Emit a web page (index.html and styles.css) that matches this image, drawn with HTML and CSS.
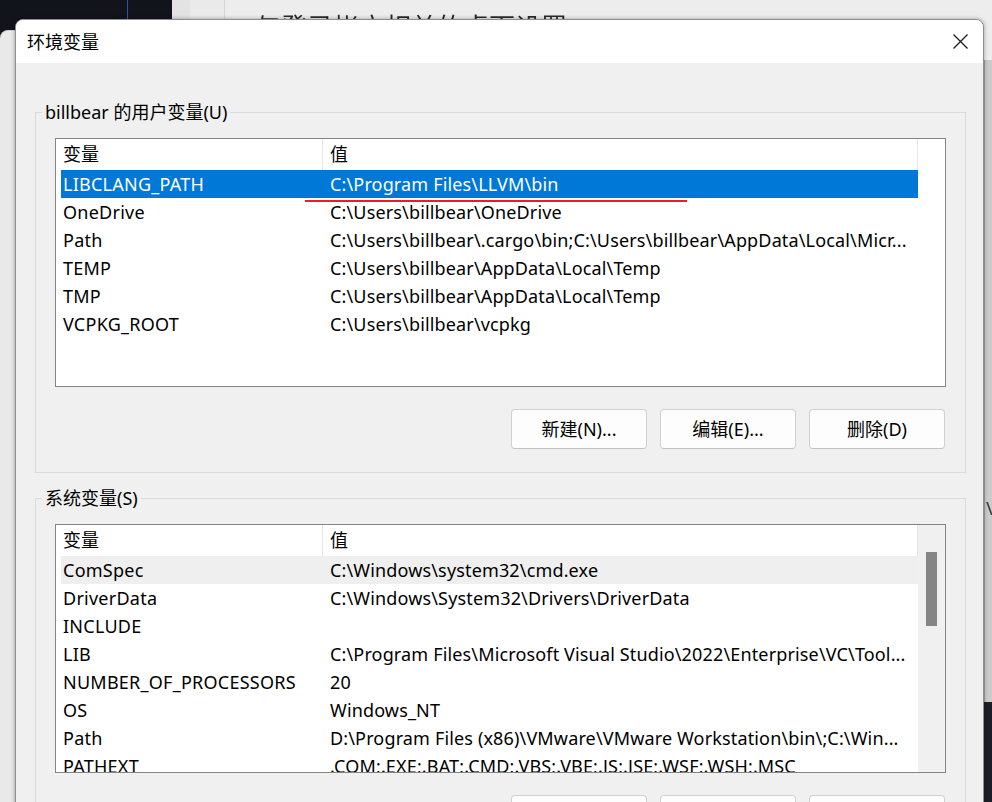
FILE: index.html
```html
<!DOCTYPE html>
<html lang="zh-CN">
<head>
<meta charset="utf-8">
<title>环境变量</title>
<link rel="stylesheet" href="styles.css">
</head>
<body>
<div class="bg-dark"></div>
<div class="bg-blue"></div>
<div class="bg-strip1"></div>
<div class="bg-strip2"></div>
<div class="bg-text">与登录帐户相关的桌面设置</div>
<div class="win-left"></div>
<div class="win-right"><span class="win-right-glyph">\</span></div>
<div class="win-right-dark"></div>

<div class="dialog">
  <div class="titlebar">
    <span class="title">环境变量</span>
    <svg class="close" width="15" height="15" viewBox="0 0 15 15"><path d="M0.5 0.5 L14.5 14.5 M14.5 0.5 L0.5 14.5" stroke="#1a1a1a" stroke-width="1.25" fill="none"/></svg>
  </div>
  <div class="dlg-body">
    <fieldset class="group">
      <legend>billbear 的用户变量(U)</legend>
      <div class="group-inner">
        <div class="list">
          <div class="list-main">
            <div class="list-head"><div class="hcell">变量</div><div class="hcell">值</div></div>
            <div class="row selected"><div class="cell">LIBCLANG_PATH</div><div class="cell val">C:\Program Files\LLVM\bin</div></div>
            <div class="row"><div class="cell">OneDrive</div><div class="cell val">C:\Users\billbear\OneDrive</div></div>
            <div class="row"><div class="cell">Path</div><div class="cell val">C:\Users\billbear\.cargo\bin;C:\Users\billbear\AppData\Local\Micr...</div></div>
            <div class="row"><div class="cell">TEMP</div><div class="cell val">C:\Users\billbear\AppData\Local\Temp</div></div>
            <div class="row"><div class="cell">TMP</div><div class="cell val">C:\Users\billbear\AppData\Local\Temp</div></div>
            <div class="row"><div class="cell">VCPKG_ROOT</div><div class="cell val">C:\Users\billbear\vcpkg</div></div>
          </div>
          <div class="list-side"></div>
          <div class="red-mark"></div>
        </div>
        <div class="btns">
          <button class="btn">新建(N)...</button>
          <button class="btn">编辑(E)...</button>
          <button class="btn">删除(D)</button>
        </div>
      </div>
    </fieldset>

    <fieldset class="group">
      <legend>系统变量(S)</legend>
      <div class="group-inner">
        <div class="list">
          <div class="list-main">
            <div class="list-head"><div class="hcell">变量</div><div class="hcell">值</div></div>
            <div class="row hover"><div class="cell">ComSpec</div><div class="cell val">C:\Windows\system32\cmd.exe</div></div>
            <div class="row"><div class="cell">DriverData</div><div class="cell val">C:\Windows\System32\Drivers\DriverData</div></div>
            <div class="row"><div class="cell">INCLUDE</div><div class="cell val"></div></div>
            <div class="row"><div class="cell">LIB</div><div class="cell val">C:\Program Files\Microsoft Visual Studio\2022\Enterprise\VC\Tool...</div></div>
            <div class="row"><div class="cell">NUMBER_OF_PROCESSORS</div><div class="cell val">20</div></div>
            <div class="row"><div class="cell">OS</div><div class="cell val">Windows_NT</div></div>
            <div class="row"><div class="cell">Path</div><div class="cell val">D:\Program Files (x86)\VMware\VMware Workstation\bin\;C:\Win...</div></div>
            <div class="row"><div class="cell">PATHEXT</div><div class="cell val">.COM;.EXE;.BAT;.CMD;.VBS;.VBE;.JS;.JSE;.WSF;.WSH;.MSC</div></div>
          </div>
          <div class="list-side scrollbar"><div class="thumb"></div></div>
        </div>
        <div class="btns">
          <button class="btn">新建(W)...</button>
          <button class="btn">编辑(I)...</button>
          <button class="btn">删除(L)</button>
        </div>
      </div>
    </fieldset>
  </div>
</div>
</body>
</html>
```

FILE: styles.css
```css
html, body {
  margin: 0;
  padding: 0;
}

body {
  width: 992px;
  height: 802px;
  overflow: hidden;
  position: relative;
  background: #ededed;
  font-family: "Noto Sans", "Noto Sans CJK SC", sans-serif;
  color: #000;
}

/* ---- desktop behind the dialog ---- */
.bg-dark {
  position: absolute;
  left: 0;
  top: 0;
  width: 172px;
  height: 40px;
  background: #11141b;
}

.bg-blue {
  position: absolute;
  left: 127px;
  top: 0;
  width: 1px;
  height: 19px;
  background: #2b5797;
}

.bg-strip1 {
  position: absolute;
  left: 172px;
  top: 0;
  width: 18px;
  height: 30px;
  background: #e3e3e3;
}

.bg-strip2 {
  position: absolute;
  left: 190px;
  top: 0;
  width: 34px;
  height: 30px;
  background: #eaeaea;
  border-right: 1px solid #d6d6d6;
}

.bg-text {
  position: absolute;
  left: 255px;
  top: 9px;
  font-family: "Noto Sans CJK SC", sans-serif;
  font-size: 26px;
  line-height: 34px;
  color: #2a2a2a;
  white-space: nowrap;
  filter: blur(0.6px);
}

.win-left {
  position: absolute;
  left: 0;
  top: 30px;
  width: 40px;
  height: 772px;
  background: #e9e9e9;
  border-top: 1px solid #d0d0d0;
  border-top-left-radius: 8px;
}

.win-right {
  position: absolute;
  left: 984px;
  top: 60px;
  width: 8px;
  height: 642px;
  background: #cbcbcb;
  border-left: 1px solid #a4a4a4;
  overflow: hidden;
}

.win-right-glyph {
  position: absolute;
  left: 1px;
  top: 436px;
  font-size: 18px;
  color: #333;
}

.win-right-dark {
  position: absolute;
  left: 984px;
  top: 702px;
  width: 8px;
  height: 100px;
  background: #1b1e25;
}

/* ---- dialog ---- */
.dialog {
  position: absolute;
  left: 15px;
  top: 19px;
  width: 967px;
  height: 800px;
  background: #f0f0f0;
  border: 1px solid #8e8e8e;
  border-radius: 8px 8px 0 0;
  box-shadow: 0 0 4px rgba(0, 0, 0, 0.35);
  overflow: hidden;
}

.titlebar {
  height: 43px;
  background: #ffffff;
  display: flex;
  align-items: center;
  justify-content: space-between;
  padding: 0 15px 0 11px;
}

.title {
  font-family: "Noto Sans CJK SC", sans-serif;
  font-size: 18px;
  line-height: 24px;
  margin-top: -2px;
}

.close {
  display: block;
  margin-top: -1px;
}

.dlg-body {
  padding-top: 37px;
}

.group {
  margin: 0 0 0 19px;
  padding: 0;
  width: 931px;
  min-width: 0;
  box-sizing: border-box;
  border: 1px solid #dadada;
}

.group + .group {
  margin-top: 13px;
}

.group legend {
  margin-left: 6px;
  padding: 0 3px;
  font-size: 18px;
  line-height: 24px;
}

.group-inner {
  padding: 14px 19px 23px;
}

/* ---- list view ---- */
.list {
  position: relative;
  width: 891px;
  height: 249px;
  box-sizing: border-box;
  border: 1px solid #848484;
  background: #ffffff;
  display: flex;
  overflow: hidden;
}

.list-main {
  width: 862px;
  padding-left: 5px;
  box-sizing: border-box;
  flex: none;
}

.list-head {
  display: grid;
  grid-template-columns: 262px 1fr;
  height: 31px;
}

.hcell {
  font-size: 18px;
  line-height: 31px;
  padding-left: 2px;
  border-right: 1px solid #e5e5e5;
  white-space: nowrap;
}

.hcell + .hcell {
  padding-left: 7px;
}

.row {
  display: grid;
  grid-template-columns: 262px 1fr;
  height: 28px;
  font-size: 18px;
  line-height: 28px;
  white-space: nowrap;
}

.cell {
  padding-left: 2px;
  overflow: hidden;
  letter-spacing: 0.25px;
}

.cell.val {
  padding-left: 7px;
  letter-spacing: 0.15px;
}

.row.selected {
  background: #0078d7;
  color: #ffffff;
}

.row.hover {
  background: #efefef;
}

.list-side {
  flex: 1;
}

.scrollbar {
  background: #f0f0f0;
  padding-top: 27px;
  padding-left: 8px;
  box-sizing: border-box;
}

.thumb {
  width: 11px;
  height: 74px;
  background: #858585;
}

.red-mark {
  position: absolute;
  left: 249px;
  top: 61px;
  width: 382px;
  height: 2px;
  background: #e81c2a;
}

/* ---- buttons ---- */
.btns {
  display: flex;
  justify-content: flex-end;
  gap: 13px;
  margin-top: 22px;
  padding-right: 1px;
}

.btn {
  width: 136px;
  height: 40px;
  padding: 0;
  background: #fdfdfd;
  border: 1px solid #d0d0d0;
  border-bottom-color: #c2c2c2;
  border-radius: 4px;
  font-family: "Noto Sans", "Noto Sans CJK SC", sans-serif;
  font-size: 18px;
  line-height: 24px;
  color: #000;
}
```
